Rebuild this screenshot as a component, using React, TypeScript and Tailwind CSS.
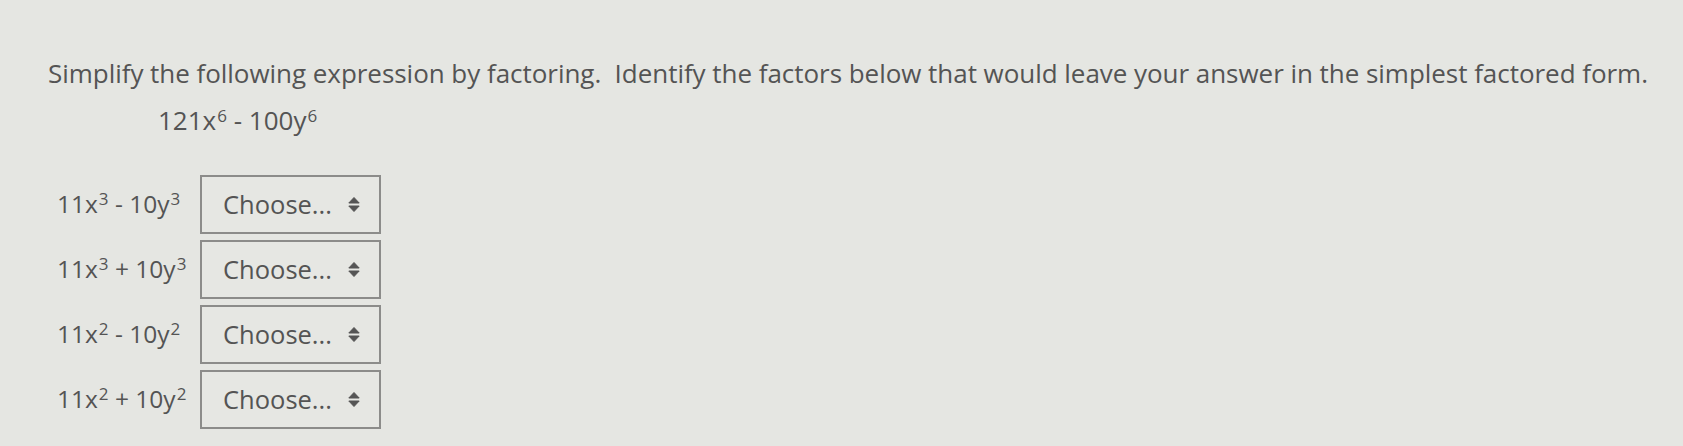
import React from "react";

const rows = [
  { a: "11x", e: "3", op: "-", b: "10y" },
  { a: "11x", e: "3", op: "+", b: "10y" },
  { a: "11x", e: "2", op: "-", b: "10y" },
  { a: "11x", e: "2", op: "+", b: "10y" },
];

function Arrows() {
  return (
    <svg width="12" height="17" viewBox="0 0 12 17" className="shrink-0">
      <path d="M6 1.5 L11.2 7 L0.8 7 Z" fill="#555" stroke="#555" strokeWidth="1" strokeLinejoin="round" />
      <path d="M6 15.5 L11.2 10 L0.8 10 Z" fill="#555" stroke="#555" strokeWidth="1" strokeLinejoin="round" />
    </svg>
  );
}

export default function App() {
  return (
    <div
      className="w-[1683px] h-[446px] overflow-hidden bg-[#e5e6e2] text-[#545454] pl-[48px] pt-[55px]"
      style={{ fontFamily: '"Open Sans", sans-serif' }}
    >
      <p className="text-[26px] leading-[36px] whitespace-nowrap tracking-[-0.04px]">
        Simplify the following expression by factoring.&nbsp; Identify the factors below that would leave your answer in the simplest factored form.
      </p>
      <p className="ml-[110px] mt-[12px] text-[26px] leading-[34px]">
        121x<sup className="text-[17px] ml-[1px]">6</sup> - 100y<sup className="text-[17px] ml-[1px]">6</sup>
      </p>
      <div className="mt-[38px] flex flex-col gap-[6px] ml-[9px]">
        {rows.map((r, i) => (
          <div key={i} className="flex items-center">
            <div className="w-[143px] text-[24.5px] whitespace-nowrap">
              {r.a}
              <sup className="text-[17px] ml-[1px]">{r.e}</sup> {r.op} {r.b}
              <sup className="text-[17px] ml-[1px]">{r.e}</sup>
            </div>
            <div className="w-[181px] h-[59px] border-2 border-[#8c8c8a] bg-[#e6e7e3] flex items-center pl-[21px] gap-[16px]">
              <span className="text-[25.5px]">Choose...</span>
              <Arrows />
            </div>
          </div>
        ))}
      </div>
    </div>
  );
}
